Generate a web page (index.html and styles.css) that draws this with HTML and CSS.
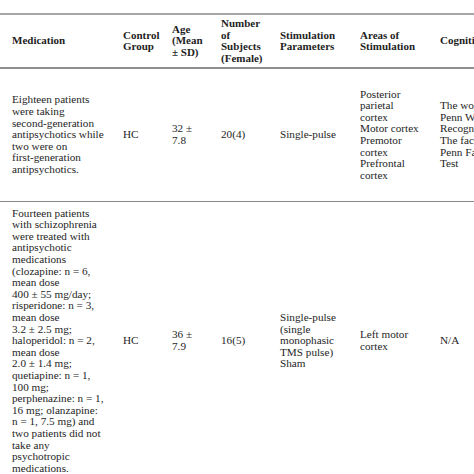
FILE: index.html
```html
<!DOCTYPE html>
<html>
<head>
<meta charset="utf-8">
<link rel="stylesheet" href="styles.css">
</head>
<body>
<table class="study-table">
  <colgroup>
    <col class="c-med"><col class="c-ctrl"><col class="c-age"><col class="c-num"><col class="c-stim"><col class="c-area"><col class="c-cog">
  </colgroup>
  <thead>
    <tr>
      <th>Medication</th>
      <th>Control<br>Group</th>
      <th>Age<br>(Mean<br>± SD)</th>
      <th>Number<br>of<br>Subjects<br>(Female)</th>
      <th>Stimulation<br>Parameters</th>
      <th>Areas of<br>Stimulation</th>
      <th>Cognitive Assessment</th>
    </tr>
  </thead>
  <tbody>
    <tr class="row-a">
      <td>Eighteen patients<br>were taking<br>second-generation<br>antipsychotics while<br>two were on<br>first-generation<br>antipsychotics.</td>
      <td>HC</td>
      <td>32 ±<br>7.8</td>
      <td>20(4)</td>
      <td>Single-pulse</td>
      <td>Posterior<br>parietal<br>cortex<br>Motor cortex<br>Premotor<br>cortex<br>Prefrontal<br>cortex</td>
      <td>The word memory test:<br>Penn Word Memory<br>Recognition Test<br>The face memory test:<br>Penn Face Memory<br>Test</td>
    </tr>
    <tr class="row-b">
      <td>Fourteen patients<br>with schizophrenia<br>were treated with<br>antipsychotic<br>medications<br>(clozapine: n = 6,<br>mean dose<br>400 ± 55 mg/day;<br>risperidone: n = 3,<br>mean dose<br>3.2 ± 2.5 mg;<br>haloperidol: n = 2,<br>mean dose<br>2.0 ± 1.4 mg;<br>quetiapine: n = 1,<br>100 mg;<br>perphenazine: n = 1,<br>16 mg; olanzapine:<br>n = 1, 7.5 mg) and<br>two patients did not<br>take any<br>psychotropic<br>medications.</td>
      <td>HC</td>
      <td>36 ±<br>7.9</td>
      <td>16(5)</td>
      <td>Single-pulse<br>(single<br>monophasic<br>TMS pulse)<br>Sham</td>
      <td>Left motor<br>cortex</td>
      <td>N/A</td>
    </tr>
  </tbody>
</table>
</body>
</html>
```
FILE: styles.css
```css
html, body {
  margin: 0;
  padding: 0;
  background: #ffffff;
  overflow: hidden;
}

.study-table {
  margin-top: 13px;
  border-collapse: collapse;
  table-layout: fixed;
  width: 600px;
  font-family: "Liberation Serif", "Times New Roman", serif;
  color: #1e1e1e;
}

.c-med { width: 117px; }
.c-ctrl { width: 49px; }
.c-age { width: 49px; }
.c-num { width: 59px; }
.c-stim { width: 80px; }
.c-area { width: 80px; }
.c-cog { width: 166px; }

.study-table th,
.study-table td {
  text-align: left;
  vertical-align: middle;
  white-space: nowrap;
  padding: 0 6px;
}

.study-table th:first-child,
.study-table td:first-child {
  padding-left: 12px;
}

.study-table th {
  font-weight: bold;
  font-size: 11px;
  line-height: 11.5px;
  height: 52px;
  border-top: 2px solid #a6a6a6;
  border-bottom: 2px solid #8e8e8e;
  padding-top: 0;
  padding-bottom: 0;
}

.study-table td {
  font-size: 11.2px;
  line-height: 11.6px;
}

.row-a td {
  height: 132px;
  border-bottom: 1px solid #8a8a8a;
}

.row-b td {
  height: 278px;
}
```
